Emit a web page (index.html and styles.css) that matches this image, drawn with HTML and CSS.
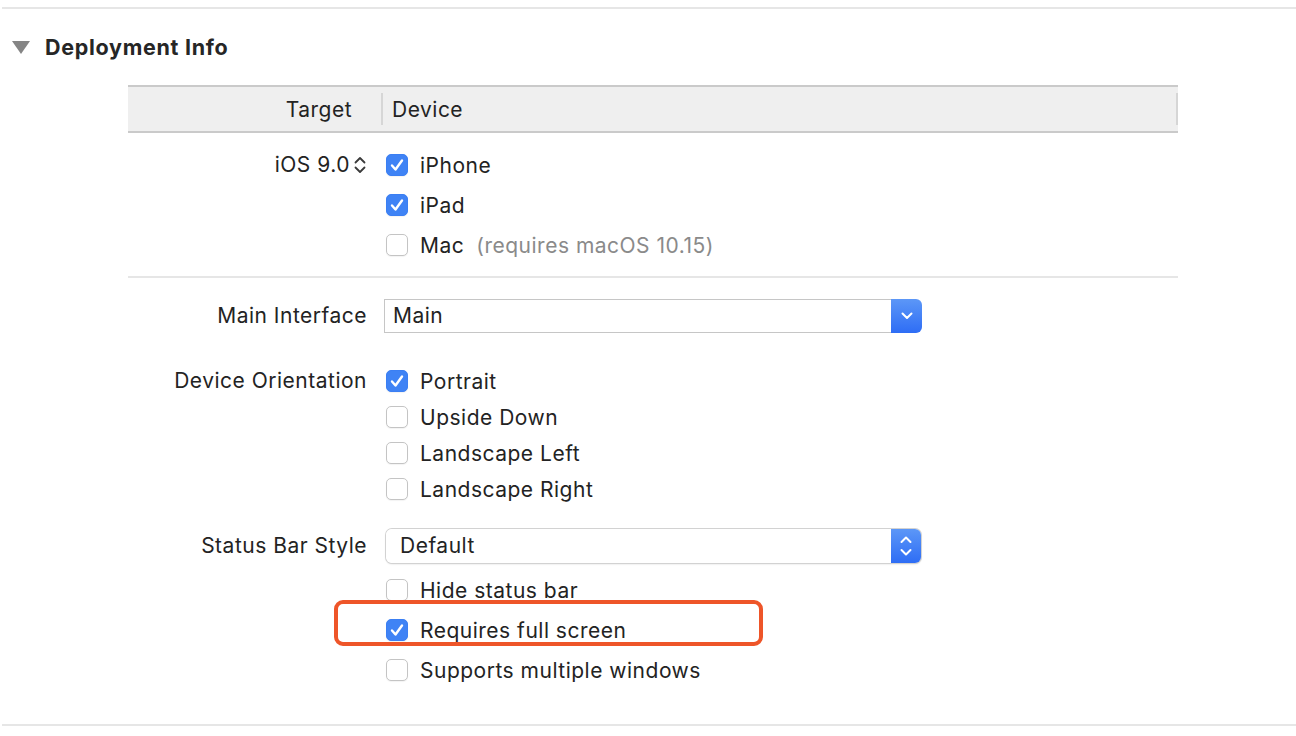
FILE: index.html
```html
<!DOCTYPE html>
<html>
<head>
<meta charset="utf-8">
<link rel="stylesheet" href="styles.css">
</head>
<body>
<div class="topline"></div>
<div class="section-title">
  <svg class="disclosure" width="20" height="15" viewBox="0 0 20 15"><polygon points="0,0 18,0 9,13" fill="#858585"/></svg>
  <span>Deployment Info</span>
</div>

<div class="panel">
  <div class="thead">
    <div class="th th-target">Target</div>
    <div class="th th-device">Device</div>
  </div>

  <div class="group group-device">
    <div class="label ios"><span>iOS 9.0</span>
      <svg class="stepper" width="14" height="20" viewBox="0 0 14 20"><path d="M2.5 7.5 L7 3 L11.5 7.5 M2.5 12.5 L7 17 L11.5 12.5" fill="none" stroke="#3a3a3a" stroke-width="1.8" stroke-linecap="round" stroke-linejoin="round"/></svg>
    </div>
    <div class="values">
      <div class="check-row"><span class="cb on"><svg width="22" height="22" viewBox="0 0 22 22"><path d="M6 11.5 L9.5 15.5 L16 6.5" fill="none" stroke="#fff" stroke-width="2.4" stroke-linecap="round" stroke-linejoin="round"/></svg></span><span>iPhone</span></div>
      <div class="check-row"><span class="cb on"><svg width="22" height="22" viewBox="0 0 22 22"><path d="M6 11.5 L9.5 15.5 L16 6.5" fill="none" stroke="#fff" stroke-width="2.4" stroke-linecap="round" stroke-linejoin="round"/></svg></span><span>iPad</span></div>
      <div class="check-row"><span class="cb"></span><span>Mac</span><span class="note">(requires macOS 10.15)</span></div>
    </div>
  </div>

  <div class="divider"></div>

  <div class="group group-main">
    <div class="label">Main Interface</div>
    <div class="values">
      <div class="combo">
        <span class="combo-text">Main</span>
        <span class="combo-btn"><svg width="14" height="10" viewBox="0 0 14 10"><path d="M2.5 2.5 L7 7 L11.5 2.5" fill="none" stroke="#fff" stroke-width="2" stroke-linecap="round" stroke-linejoin="round"/></svg></span>
      </div>
    </div>
  </div>

  <div class="group group-orient">
    <div class="label">Device Orientation</div>
    <div class="values">
      <div class="check-row small"><span class="cb on"><svg width="22" height="22" viewBox="0 0 22 22"><path d="M6 11.5 L9.5 15.5 L16 6.5" fill="none" stroke="#fff" stroke-width="2.4" stroke-linecap="round" stroke-linejoin="round"/></svg></span><span>Portrait</span></div>
      <div class="check-row small"><span class="cb"></span><span>Upside Down</span></div>
      <div class="check-row small"><span class="cb"></span><span>Landscape Left</span></div>
      <div class="check-row small"><span class="cb"></span><span>Landscape Right</span></div>
    </div>
  </div>

  <div class="group group-status">
    <div class="label">Status Bar Style</div>
    <div class="values">
      <div class="popup">
        <span class="popup-text">Default</span>
        <span class="popup-btn"><svg width="14" height="26" viewBox="0 0 14 26"><path d="M2.5 9 L7 4.5 L11.5 9 M2.5 17 L7 21.5 L11.5 17" fill="none" stroke="#fff" stroke-width="2" stroke-linecap="round" stroke-linejoin="round"/></svg></span>
      </div>
      <div class="status-checks">
        <div class="check-row"><span class="cb"></span><span>Hide status bar</span></div>
        <div class="check-row highlighted"><span class="cb on"><svg width="22" height="22" viewBox="0 0 22 22"><path d="M6 11.5 L9.5 15.5 L16 6.5" fill="none" stroke="#fff" stroke-width="2.4" stroke-linecap="round" stroke-linejoin="round"/></svg></span><span>Requires full screen</span><span class="redbox"></span></div>
        <div class="check-row"><span class="cb"></span><span>Supports multiple windows</span></div>
      </div>
    </div>
  </div>
</div>

<div class="bottomline"></div>
</body>
</html>
```

FILE: styles.css
```css
* { box-sizing: border-box; }
html, body { margin: 0; padding: 0; background: #ffffff; }
body {
  width: 1296px;
  height: 736px;
  overflow: hidden;
  font-family: "Inter", "Liberation Sans", sans-serif;
  font-size: 21px;
  letter-spacing: 0.5px;
  color: #232323;
}

.topline {
  margin: 7px 0 0 2px;
  height: 2px;
  background: #e6e6e6;
}

.section-title {
  display: flex;
  align-items: center;
  height: 76px;
  padding-left: 12px;
  font-weight: 700;
  font-size: 21.5px;
  letter-spacing: 0.7px;
  color: #262626;
}
.section-title .disclosure { margin-right: 13px; margin-top: 2px; }

.panel {
  margin-left: 128px;
  width: 1050px;
}

.thead {
  display: grid;
  grid-template-columns: 255px 1fr;
  height: 48px;
  background: #efefef;
  border-top: 2px solid #cacaca;
  border-bottom: 2px solid #cacaca;
}
.th {
  display: flex;
  align-items: center;
}
.th-target {
  justify-content: flex-end;
  padding-right: 29px;
  border-right: 2px solid #d6d6d6;
  margin: 6px 0;
}
.th-device {
  padding-left: 9px;
  border-right: 2px solid #d6d6d6;
  margin: 6px 0;
}

.group {
  display: grid;
  grid-template-columns: 239px 1fr;
  column-gap: 17px;
}
.label {
  text-align: right;
  line-height: 36px;
}
.group-device { margin-top: 12px; }
.group-device .label { line-height: 40px; }
.label.ios {
  display: flex;
  justify-content: flex-end;
  align-items: center;
  height: 40px;
  gap: 3px;
}

.check-row {
  display: flex;
  align-items: center;
  height: 40px;
  position: relative;
}
.check-row.small { height: 36px; }

.cb {
  width: 22px;
  height: 22px;
  border-radius: 5px;
  border: 1px solid #c4c4c4;
  background: #fff;
  margin-left: 2px;
  margin-right: 12px;
  flex: none;
  display: block;
  box-shadow: 0 1px 1px rgba(0,0,0,0.05);
}
.cb svg { display: block; margin: -1px; }
.cb.on {
  background: #3f83f5;
  border-color: #3b7ff3;
}
.note {
  color: #8a8a8a;
  margin-left: 12px;
}

.divider {
  height: 2px;
  background: #e6e6e6;
  margin-top: 11px;
}

.group-main { margin-top: 21px; }
.group-main .label { line-height: 34px; }
.combo {
  display: flex;
  width: 538px;
  height: 34px;
}
.combo-text {
  flex: 1;
  border: 1px solid #c6c6c6;
  border-right: none;
  padding-left: 8px;
  line-height: 32px;
}
.combo-btn {
  width: 31px;
  background: linear-gradient(#5c97f7, #2e6df5);
  border-radius: 0 6px 6px 0;
  display: flex;
  align-items: center;
  justify-content: center;
}

.group-orient { margin-top: 30px; }

.group-status { margin-top: 22px; }
.group-status .label { line-height: 34px; }
.popup {
  display: flex;
  width: 535px;
  height: 34px;
  margin-left: 2px;
  border-radius: 6px;
  box-shadow: 0 0 0 1px #d2d2d2, 0 1px 2px rgba(0,0,0,0.18);
  overflow: hidden;
}
.popup-text {
  flex: 1;
  padding-left: 14px;
  line-height: 34px;
  background: #fff;
}
.popup-btn {
  width: 30px;
  background: linear-gradient(#5c97f7, #2e6df5);
  display: flex;
  align-items: center;
  justify-content: center;
}
.status-checks { margin-top: 7px; }

.redbox {
  position: absolute;
  left: -50px;
  top: -10px;
  width: 429px;
  height: 46px;
  border: 4px solid #ee5529;
  border-radius: 9px;
}

.bottomline {
  position: absolute;
  left: 2px;
  right: 0;
  top: 724px;
  height: 2px;
  background: #e6e6e6;
}
```
